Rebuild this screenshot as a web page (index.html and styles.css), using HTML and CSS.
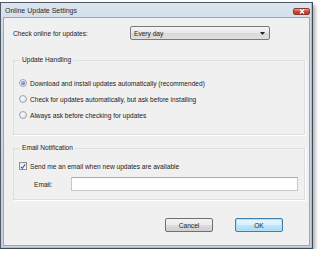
FILE: index.html
```html
<!DOCTYPE html>
<html>
<head>
<meta charset="utf-8">
<link rel="stylesheet" href="styles.css">
</head>
<body>
<div class="window">
  <div class="titlebar">
    <span class="title">Online Update Settings</span>
    <span class="close"><svg width="8" height="5" viewBox="0 0 8 5"><path d="M2 0.5 L6 4.5 M6 0.5 L2 4.5" stroke="#fff" stroke-width="1.3"/></svg></span>
  </div>
  <div class="content">
    <div class="row-top">
      <span class="lbl-check">Check online for updates:</span>
      <div class="select"><span>Every day</span><svg class="arrow" width="5" height="3" viewBox="0 0 5 3"><path d="M0 0 H5 L2.5 3 Z" fill="#222"/></svg></div>
    </div>
    <fieldset class="group g1">
      <legend>Update Handling</legend>
      <div class="opt"><span class="radio on"></span><span>Download and install updates automatically (recommended)</span></div>
      <div class="opt"><span class="radio"></span><span>Check for updates automatically, but ask before installing</span></div>
      <div class="opt"><span class="radio"></span><span>Always ask before checking for updates</span></div>
    </fieldset>
    <fieldset class="group g2">
      <legend>Email Notification</legend>
      <div class="opt"><span class="check"><svg width="7" height="7" viewBox="0 0 7 7"><path d="M1 3.8 L2.8 5.6 L6 1" stroke="#4a5f9a" stroke-width="1.3" fill="none"/></svg></span><span>Send me an email when new updates are available</span></div>
      <div class="email-row"><span class="email-lbl">Email:</span><div class="input"></div></div>
    </fieldset>
    <div class="buttons">
      <div class="btn">Cancel</div>
      <div class="btn ok">OK</div>
    </div>
  </div>
</div>
</body>
</html>
```
FILE: styles.css
```css
html, body {
  margin: 0;
  padding: 0;
  background: #ffffff;
}
body {
  font-family: "Liberation Sans", Arial, sans-serif;
  font-size: 6.6px;
  color: #222222;
  padding-top: 2px;
}
.window {
  box-sizing: border-box;
  width: 313px;
  height: 247px;
  border: 1px solid #4f5963;
  border-right-color: #3f4a55;
  border-bottom-color: #3f4a55;
  background: linear-gradient(#dbe5ee, #ccd9e5 30px, #c6d3df);
  padding: 0 2px 2px 2px;
  display: flex;
  flex-direction: column;
  box-shadow: 2px 3px 4px rgba(0, 0, 0, 0.35), inset -1px -1px 0 #79d6dc;
}
.titlebar {
  height: 14px;
  display: flex;
  align-items: center;
  padding-left: 2px;
}
.title {
  font-size: 7px;
  color: #1c2c3c;
}
.close {
  margin-left: auto;
  margin-top: 3px;
  width: 17px;
  height: 7px;
  box-sizing: border-box;
  border: 1px solid #8b3a30;
  border-radius: 2px;
  background: linear-gradient(#e8a294, #d0483a 50%, #c23224);
  display: flex;
  align-items: center;
  justify-content: center;
}
.close svg { display: block; }
.content {
  flex: 1;
  background: #f0f0f0;
  border: 1px solid #97a9ba;
  padding: 8px 4px 0 9px;
  box-sizing: border-box;
}
.row-top {
  display: flex;
  align-items: center;
  height: 14px;
}
.lbl-check {
  width: 117px;
}
.select {
  box-sizing: border-box;
  width: 140px;
  height: 14px;
  border: 1px solid #7a7a7a;
  border-radius: 2px;
  background: linear-gradient(#f4f4f4, #e8e8e8 50%, #d9d9d9 51%, #dedede);
  display: flex;
  align-items: center;
  padding: 0 4px 0 3px;
}
.select .arrow {
  margin-left: auto;
}
.group {
  box-sizing: border-box;
  margin: 0;
  border: 1px solid #d9dfe4;
  box-shadow: 1px 1px 0 #ffffff;
  width: 292px;
  min-width: 0;
}
.group legend {
  padding: 0 2px;
  margin-left: 1px;
  line-height: 10px;
  height: 10px;
}
.g1 {
  margin-top: 15px;
  padding: 10px 5px 11px 5px;
}
.g2 {
  margin-top: 8px;
  padding: 5px 6px 7px 5px;
}
.opt {
  display: flex;
  align-items: center;
  height: 16px;
}
.radio {
  box-sizing: border-box;
  width: 8px;
  height: 8px;
  border-radius: 50%;
  border: 1px solid #a2a8ae;
  background: radial-gradient(circle at 40% 35%, #fafafa, #dcdcdc);
  margin-right: 3px;
  flex: none;
  display: flex;
  align-items: center;
  justify-content: center;
}
.radio.on::after {
  content: "";
  width: 4px;
  height: 4px;
  border-radius: 50%;
  background: radial-gradient(circle at 35% 30%, #9fc3ee, #2f5fa8);
}
.check {
  box-sizing: border-box;
  width: 8px;
  height: 8px;
  border: 1px solid #8e8f8f;
  background: linear-gradient(#eaeaea, #fcfcfc);
  margin-right: 3px;
  flex: none;
  display: flex;
  align-items: center;
  justify-content: center;
}
.check svg { display: block; }
.email-row {
  display: flex;
  align-items: center;
  height: 16px;
  margin-top: 2px;
}
.email-lbl {
  margin-left: 15px;
  width: 37px;
}
.input {
  box-sizing: border-box;
  flex: 1;
  height: 14px;
  background: #ffffff;
  border: 1px solid #c3c9cf;
  border-top-color: #abadb3;
}
.buttons {
  display: flex;
  justify-content: flex-end;
  gap: 22px;
  margin-top: 18px;
  padding-right: 22px;
}
.btn {
  box-sizing: border-box;
  width: 48px;
  height: 14px;
  border: 1px solid #707070;
  border-radius: 2px;
  background: linear-gradient(#f2f2f2, #ebebeb 50%, #dddddd 51%, #cfcfcf);
  display: flex;
  align-items: center;
  justify-content: center;
}
.btn.ok {
  border-color: #3c7fb1;
  background: linear-gradient(#eaf6fd, #d9f0fc 50%, #bee6fd 51%, #a7d9f5);
  box-shadow: inset 0 0 0 1px #b5e1f7;
}
```
